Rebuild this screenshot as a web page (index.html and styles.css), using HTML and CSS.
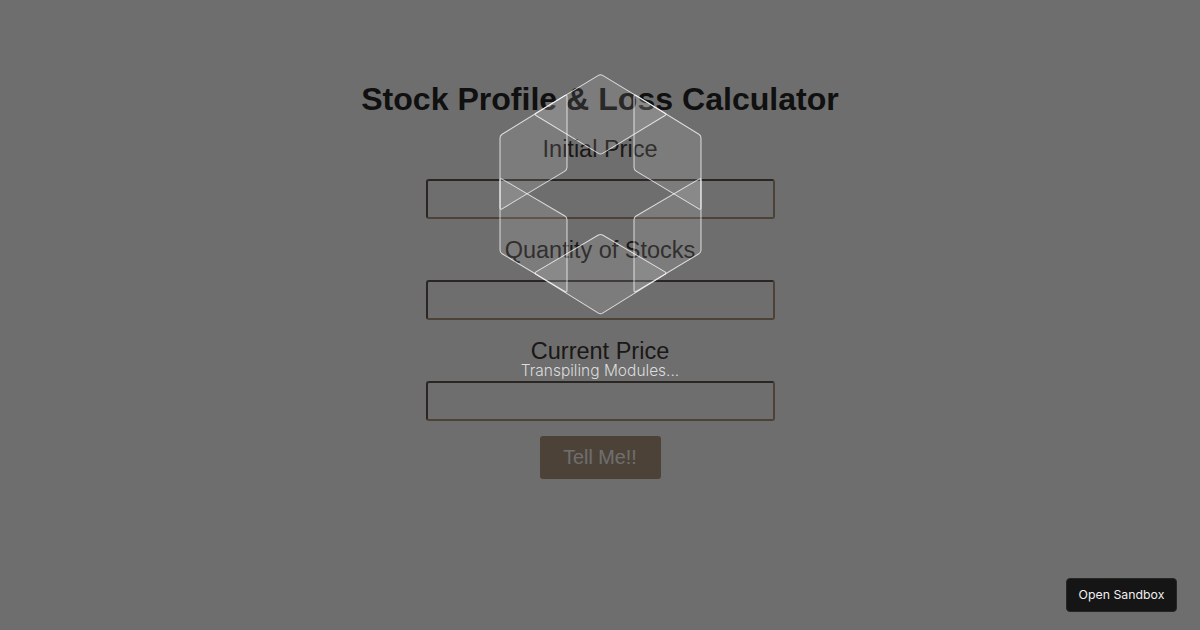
FILE: index.html
```html
<!DOCTYPE html>
<html lang="en">
<head>
<meta charset="utf-8">
<title>Stock Profile &amp; Loss Calculator</title>
<link rel="stylesheet" href="styles.css">
</head>
<body>
<main class="app">
  <h1 class="title">Stock Profile &amp; Loss Calculator</h1>
  <label class="label" for="initial">Initial Price</label>
  <input class="field" id="initial" type="text">
  <label class="label" for="quantity">Quantity of Stocks</label>
  <input class="field" id="quantity" type="text">
  <label class="label" for="current">Current Price</label>
  <input class="field" id="current" type="text">
  <button class="submit" type="button">Tell Me!!</button>
</main>
<div class="overlay">
  <svg class="logo" width="203" height="244" viewBox="0 0 203 242" preserveAspectRatio="none" aria-hidden="true">
    <g class="faces">
      <path d="M99.400 2.300Q101.500 1 103.600 2.300L166 39.800Q168 41 166 42.200L103.600 79.700Q101.500 81 99.400 79.700L37 42.200Q35 41 37 39.800Z"/>
      <path d="M65.900 22.300Q68 21 68 23.500L68 93.500Q68 96 65.900 97.300L3.100 134.700Q1 136 1 133.500L1 64.500Q1 62 3.100 60.700Z"/>
      <path d="M137.100 22.300Q135 21 135 23.500L135 93.500Q135 96 137.100 97.300L199.900 134.700Q202 136 202 133.500L202 64.500Q202 62 199.900 60.700Z"/>
      <path d="M3.100 105.200Q1 104 1 106.500L1 175.500Q1 178 3.100 179.300L65.900 216.700Q68 218 68 215.500L68 145.500Q68 143 65.900 141.800Z"/>
      <path d="M199.900 105.200Q202 104 202 106.500L202 175.500Q202 178 199.900 179.300L137.100 216.700Q135 218 135 215.500L135 145.500Q135 143 137.100 141.800Z"/>
      <path d="M99.400 160.700Q101.500 159.500 103.600 160.700L166 197.300Q168 198.500 166 199.700L103.600 238.200Q101.500 239.500 99.400 238.200L37 199.700Q35 198.500 37 197.300Z"/>
    </g>
  </svg>
  <p class="status">Transpiling Modules...</p>
  <button class="sandbox" type="button">Open Sandbox</button>
</div>
</body>
</html>
```
FILE: styles.css
```css
* { box-sizing: border-box; }
html, body { margin: 0; height: 100%; }
body {
  position: relative;
  background: #fff;
  font-family: "Liberation Sans", Arial, sans-serif;
  overflow: hidden;
}
.app {
  display: flex;
  flex-direction: column;
  align-items: center;
  padding-top: 81px;
}
.title {
  margin: 0 0 17px;
  font-size: 32.100px;
  line-height: 37px;
  font-weight: 700;
  color: #262626;
}
.label {
  font-size: 23.500px;
  line-height: 28px;
  margin-bottom: 16px;
  color: #403836;
}
.field {
  display: block;
  width: 349px;
  height: 40px;
  margin-bottom: 17px;
  border: 2px solid;
  border-color: #625854 #b39982 #b39982 #625854;
  border-radius: 3px;
  background: #fff;
}
.field:last-of-type { margin-bottom: 15px; }
.submit {
  width: 121px;
  height: 43px;
  border: 0;
  border-radius: 3px;
  background: #b39982;
  color: #fff;
  font: 19.800px "Liberation Sans", Arial, sans-serif;
}
.overlay {
  position: absolute;
  inset: 0;
  background: rgba(0, 0, 0, 0.57);
}
.logo {
  position: absolute;
  left: 498.500px;
  top: 73px;
}
.faces path {
  fill: rgba(255, 255, 255, 0.1);
  stroke: #fff;
  stroke-opacity: 0.75;
  stroke-width: 1;
}
.status {
  position: absolute;
  top: 361px;
  left: 0;
  right: 0;
  margin: 0;
  text-align: center;
  font: 300 15.500px/20px Inter, sans-serif;
  color: #dcdcdc;
}
.sandbox {
  position: absolute;
  right: 23px;
  bottom: 18px;
  width: 111px;
  height: 34px;
  padding: 0 0 2px;
  border: 1px solid #262626;
  border-radius: 4px;
  background: #151515;
  color: #f0f0f0;
  font: 400 12.300px Inter, sans-serif;
}
```
